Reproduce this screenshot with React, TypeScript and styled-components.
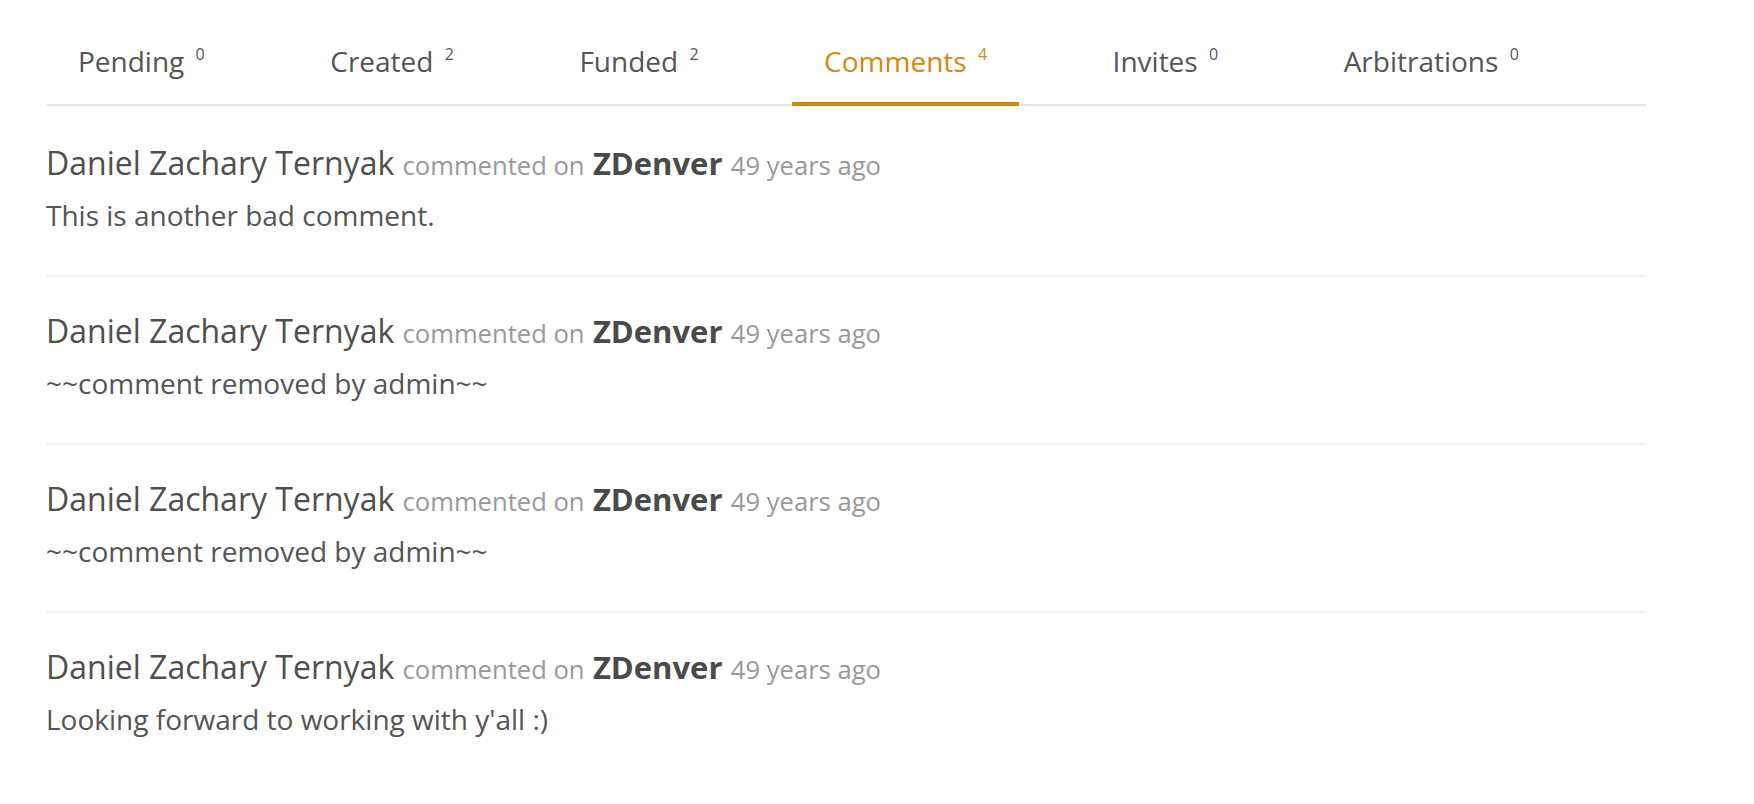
import styled, { createGlobalStyle } from 'styled-components'

const GlobalStyle = createGlobalStyle`
  body {
    margin: 0;
    background: #fff;
    font-family: "Open Sans", "Liberation Sans", sans-serif;
    color: #555;
  }
`

const Page = styled.div`
  padding-left: 46px;
`

const Panel = styled.div`
  width: 1601px;
`

const TabBar = styled.nav`
  display: flex;
  gap: 61.5px;
  border-bottom: 2px solid #e6e6e6;
`

const Tab = styled.div<{ $active?: boolean }>`
  padding: 41px 32px 21px;
  margin-bottom: -2px;
  font-size: 28px;
  line-height: 40px;
  white-space: nowrap;
  color: ${props => (props.$active ? '#d4880f' : '#555')};
  border-bottom: 4px solid ${props => (props.$active ? '#d4880f' : 'transparent')};
  cursor: pointer;
`

const Count = styled.sup`
  font-size: 16px;
  line-height: 1;
  vertical-align: 12px;
  margin-left: 4px;
`

const CommentList = styled.div`
  margin-top: 3px;
`

const CommentItem = styled.div`
  padding: 32px 0 41px;
  border-bottom: 2px solid #efefef;

  &:last-child {
    border-bottom-color: transparent;
  }
`

const Header = styled.div`
  font-size: 32px;
  line-height: 44px;
  color: #4f4f4f;
  white-space: nowrap;
`

const Muted = styled.span`
  font-size: 25.6px;
  line-height: 1;
  color: #999;
`

const Project = styled.span`
  font-size: 31px;
  line-height: 1;
  font-weight: 700;
  color: #4a4a4a;
`

const Body = styled.p`
  margin: 11px 0 0;
  font-size: 28px;
  line-height: 38px;
  color: #555;
`

const tabs = [
  { label: 'Pending', count: 0 },
  { label: 'Created', count: 2 },
  { label: 'Funded', count: 2 },
  { label: 'Comments', count: 4, active: true },
  { label: 'Invites', count: 0 },
  { label: 'Arbitrations', count: 0 },
]

const comments = [
  'This is another bad comment.',
  '~~comment removed by admin~~',
  '~~comment removed by admin~~',
  "Looking forward to working with y'all :)",
]

function App() {
  return (
    <Page>
      <GlobalStyle />
      <Panel>
        <TabBar>
          {tabs.map(tab => (
            <Tab key={tab.label} $active={tab.active}>
              {tab.label} <Count>{tab.count}</Count>
            </Tab>
          ))}
        </TabBar>
        <CommentList>
          {comments.map((text, i) => (
            <CommentItem key={i}>
              <Header>
                Daniel Zachary Ternyak <Muted>commented on</Muted>{' '}
                <Project>ZDenver</Project> <Muted>49 years ago</Muted>
              </Header>
              <Body>{text}</Body>
            </CommentItem>
          ))}
        </CommentList>
      </Panel>
    </Page>
  )
}

export default App
